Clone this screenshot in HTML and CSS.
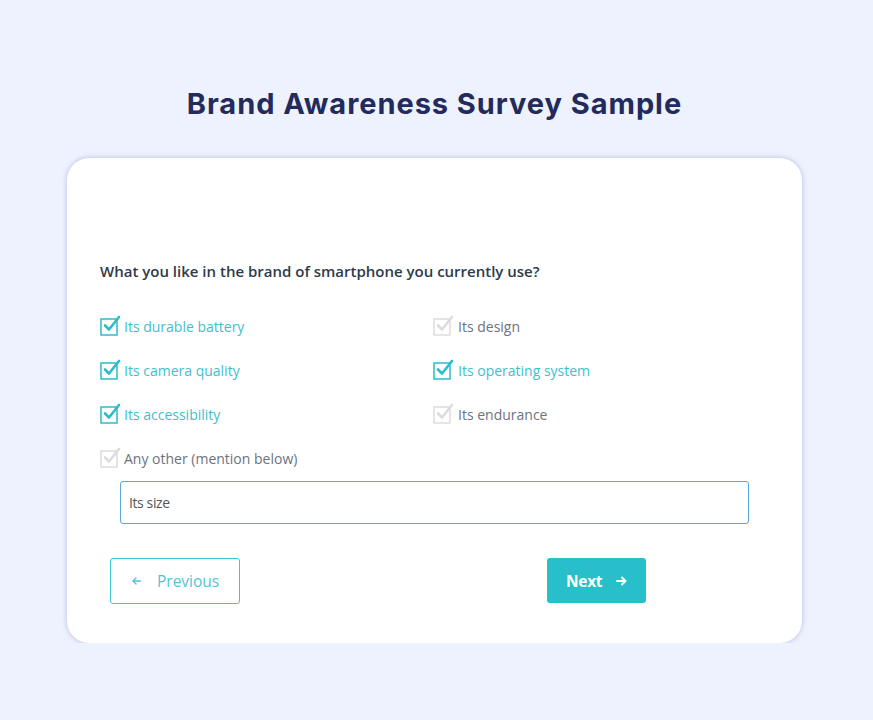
FILE: index.html
```html
<!DOCTYPE html>
<html>
<head>
<meta charset="utf-8">
<link rel="stylesheet" href="styles.css">
</head>
<body>
<div class="page">
  <h1 class="title">Brand Awareness Survey Sample</h1>
  <div class="card">
    <p class="question">What you like in the brand of smartphone you currently use?</p>
    <div class="options">
      <label class="opt checked"><span class="box"><svg viewBox="0 0 22 22" width="22" height="22"><rect x="1" y="5" width="16" height="16" fill="none" stroke="currentColor" stroke-width="1.5"/><path d="M5 11.5 L9 15.5 L19 3" fill="none" stroke="currentColor" stroke-width="2.6" stroke-linecap="round" stroke-linejoin="round"/></svg></span>Its durable battery</label>
      <label class="opt"><span class="box"><svg viewBox="0 0 22 22" width="22" height="22"><rect x="1" y="5" width="16" height="16" fill="none" stroke="currentColor" stroke-width="1.5"/><path d="M5 11.5 L9 15.5 L19 3" fill="none" stroke="currentColor" stroke-width="2.6" stroke-linecap="round" stroke-linejoin="round"/></svg></span>Its design</label>
      <label class="opt checked"><span class="box"><svg viewBox="0 0 22 22" width="22" height="22"><rect x="1" y="5" width="16" height="16" fill="none" stroke="currentColor" stroke-width="1.5"/><path d="M5 11.5 L9 15.5 L19 3" fill="none" stroke="currentColor" stroke-width="2.6" stroke-linecap="round" stroke-linejoin="round"/></svg></span>Its camera quality</label>
      <label class="opt checked"><span class="box"><svg viewBox="0 0 22 22" width="22" height="22"><rect x="1" y="5" width="16" height="16" fill="none" stroke="currentColor" stroke-width="1.5"/><path d="M5 11.5 L9 15.5 L19 3" fill="none" stroke="currentColor" stroke-width="2.6" stroke-linecap="round" stroke-linejoin="round"/></svg></span>Its operating system</label>
      <label class="opt checked"><span class="box"><svg viewBox="0 0 22 22" width="22" height="22"><rect x="1" y="5" width="16" height="16" fill="none" stroke="currentColor" stroke-width="1.5"/><path d="M5 11.5 L9 15.5 L19 3" fill="none" stroke="currentColor" stroke-width="2.6" stroke-linecap="round" stroke-linejoin="round"/></svg></span>Its accessibility</label>
      <label class="opt"><span class="box"><svg viewBox="0 0 22 22" width="22" height="22"><rect x="1" y="5" width="16" height="16" fill="none" stroke="currentColor" stroke-width="1.5"/><path d="M5 11.5 L9 15.5 L19 3" fill="none" stroke="currentColor" stroke-width="2.6" stroke-linecap="round" stroke-linejoin="round"/></svg></span>Its endurance</label>
      <label class="opt"><span class="box"><svg viewBox="0 0 22 22" width="22" height="22"><rect x="1" y="5" width="16" height="16" fill="none" stroke="currentColor" stroke-width="1.5"/><path d="M5 11.5 L9 15.5 L19 3" fill="none" stroke="currentColor" stroke-width="2.6" stroke-linecap="round" stroke-linejoin="round"/></svg></span>Any other (mention below)</label>
    </div>
    <div class="other"><input class="text" type="text" value="Its size"></div>
    <div class="actions">
      <button class="btn prev"><svg class="arrow" viewBox="0 0 9 8" width="9" height="8"><path d="M8.5 4 H1.2 M4 1 L1 4 L4 7" fill="none" stroke="currentColor" stroke-width="1.3" stroke-linecap="round" stroke-linejoin="round"/></svg>Previous</button>
      <button class="btn next">Next<svg class="arrow" viewBox="0 0 11 10" width="11" height="10"><path d="M1 5 H9.5 M6 1.5 L9.5 5 L6 8.5" fill="none" stroke="currentColor" stroke-width="2" stroke-linecap="round" stroke-linejoin="round"/></svg></button>
    </div>
  </div>
</div>
</body>
</html>
```

FILE: styles.css
```css
html, body {
  margin: 0;
  padding: 0;
  background: #eef2fe;
}
body {
  font-family: "Open Sans", sans-serif;
}
.page {
  width: 735px;
  margin: 0 auto;
  padding-top: 84px;
  transform: translateX(-2px);
}
.title {
  margin: 0 0 34px;
  text-align: center;
  font-family: Inter, "Noto Sans", sans-serif;
  font-weight: 700;
  font-size: 29px;
  line-height: 40px;
  color: #232a5c;
  letter-spacing: 0.95px;
}
.card {
  background: #fff;
  border-radius: 22px;
  box-shadow: 0 0 4px 1px rgba(180, 188, 230, 0.75);
  padding: 102px 33px 38px 33px;
  height: 345px;
}
.question {
  margin: 0 0 34px;
  font-size: 15px;
  font-weight: 600;
  color: #2e3a4b;
  line-height: 22px;
}
.options {
  display: grid;
  grid-template-columns: 333px 1fr;
  row-gap: 24px;
}
.opt {
  display: flex;
  align-items: center;
  height: 20px;
  font-size: 14px;
  color: #6b7280;
}
.opt .box {
  width: 22px;
  height: 22px;
  margin-right: 2px;
  color: #dcdcdc;
  display: block;
  margin-top: -3px;
}
.opt:nth-child(even) .box { margin-right: 3px; }
.opt .box svg { display: block; }
.opt.checked { color: #3fbfcb; }
.opt.checked .box { color: #2bbdc9; }
.other {
  padding: 13px 20px 0 20px;
}
.text {
  -webkit-appearance: none;
  appearance: none;
  width: 100%;
  box-sizing: border-box;
  height: 43px;
  border: 1px solid #5ba6da;
  border-radius: 3px;
  padding: 0 8px;
  font-family: "Open Sans", sans-serif;
  font-size: 14px;
  color: #555;
  letter-spacing: -0.4px;
  outline: none;
  background: #fff;
}
.actions {
  display: flex;
  gap: 307px;
  padding: 34px 0 0 10px;
}
.btn {
  font-family: "Open Sans", sans-serif;
  font-size: 16px;
  height: 46px;
  border-radius: 3px;
  cursor: pointer;
  display: flex;
  align-items: center;
}
.prev {
  background: #fff;
  border: 1px solid #3ec6d1;
  color: #4fc6d2;
  padding: 0 0 0 21px;
  width: 130px;
  font-size: 15.5px;
}
.prev .arrow {
  margin-right: 16px;
}
.next {
  background: #26bfca;
  border: none;
  color: #fff;
  font-weight: 700;
  padding: 0 0 0 19px;
  width: 99px;
  height: 45px;
  font-size: 15.5px;
  letter-spacing: -0.3px;
}
.next .arrow {
  margin-left: 14px;
}
```
